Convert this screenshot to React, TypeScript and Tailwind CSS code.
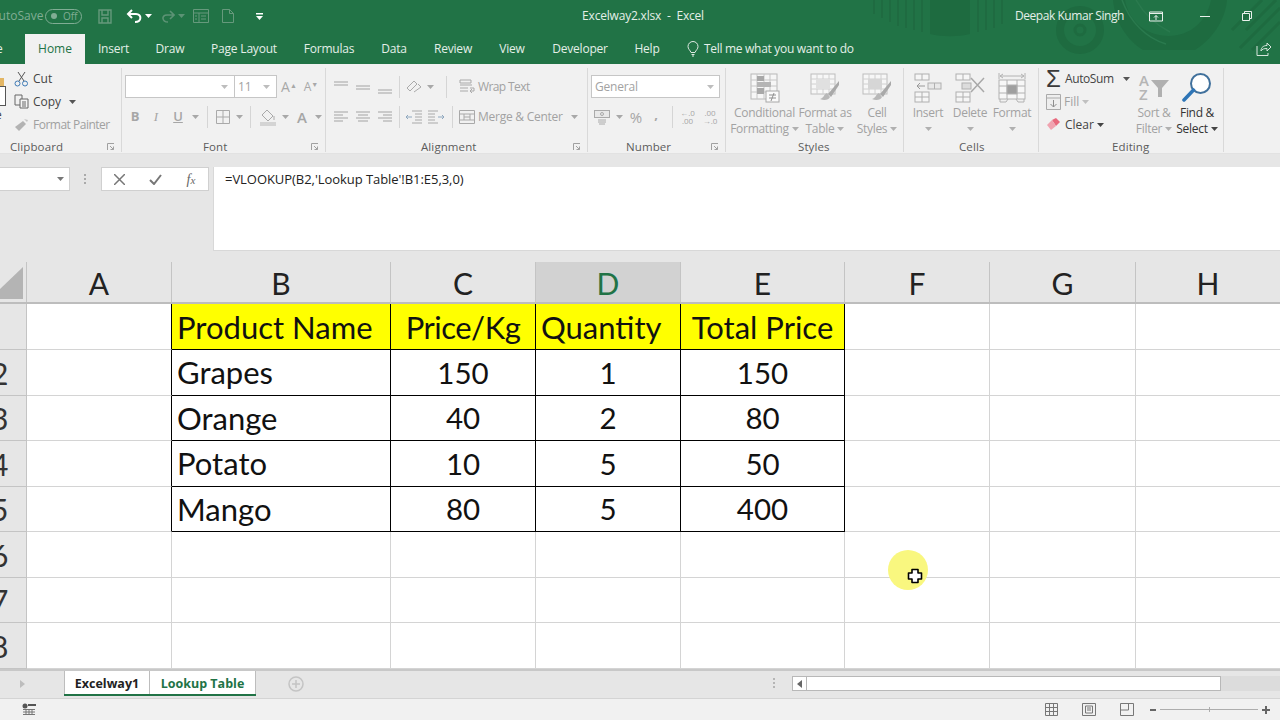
import React from "react";

const UI = "font-['Open_Sans','Noto_Sans',sans-serif]";
const SHEET = "font-['Lato','Liberation_Sans',sans-serif]";

const Chev = ({ c = "#a8a8a8" }: { c?: string }) => (
  <svg width="7" height="4" viewBox="0 0 7 4"><path d="M0 0h7L3.5 4z" fill={c} /></svg>
);

const Launcher = () => (
  <svg width="8" height="8" viewBox="0 0 8 8" fill="none" stroke="#a0a0a0"><path d="M.5 7V.5H7M3 3l3.5 3.5M6.5 3.5v3h-3" /></svg>
);

function Group({ w, label, lc, children, launch }: { w: string; label: string; lc: string; children: React.ReactNode; launch?: boolean }) {
  return (
    <div className={`${w} h-[84px] shrink-0 flex flex-col border-r border-[#d9d9d9]`}>
      <div className="h-[72px] shrink-0">{children}</div>
      <div className="flex-1 flex items-center pr-[6px] pt-[1px]">
        <span className={`${lc} text-[11.5px] leading-none text-[#5c5c5c] tracking-[0.1px]`}>{label}</span>
        {launch && <Launcher />}
      </div>
    </div>
  );
}

const Slot = ({ w, children }: { w: string; children?: React.ReactNode }) => (
  <div className={`${w} shrink-0 h-full flex items-center justify-center`}>{children}</div>
);

const Sep = () => <div className="w-px h-[22px] bg-[#d5d5d5] shrink-0" />;

const Lines = ({ v }: { v: "top" | "mid" | "bot" | "l" | "c" | "r" }) => {
  const d = {
    top: "M2 3h14M2 6h14",
    mid: "M2 7h14M2 10h14",
    bot: "M2 11h14M2 14h14",
    l: "M2 3h14M2 6h9M2 9h14M2 12h9",
    c: "M2 3h14M4 6h10M2 9h14M4 12h10",
    r: "M2 3h14M7 6h9M2 9h14M7 12h9",
  }[v];
  return <svg width="18" height="16" viewBox="0 0 18 16" fill="none" stroke="#a3a3a3"><path d={d} /></svg>;
};

function BigBtn({ w, top, bottom, icon, dark, chev }: { w: string; top: string; bottom?: string; icon: React.ReactNode; dark?: boolean; chev?: boolean }) {
  const color = dark ? "text-[#333333]" : "text-[#a2a2a2]";
  return (
    <div className={`${w} shrink-0 flex flex-col items-center`}>
      <div className="h-[33px] flex items-center justify-center">{icon}</div>
      <div className={`${color} text-[12px] leading-[16px] mt-[1px] whitespace-nowrap tracking-[-0.3px]`}>{top}</div>
      <div className={`${color} text-[12px] leading-[16px] whitespace-nowrap flex items-center gap-[3px] h-[16px] tracking-[-0.3px]`}>
        {bottom}
        {chev && <Chev c={dark ? "#444" : "#b0b0b0"} />}
      </div>
    </div>
  );
}

const IconCond = () => (
  <svg width="30" height="30" viewBox="0 0 30 30" fill="none">
    <rect x="1" y="1" width="26" height="25" fill="#f6f6f6" stroke="#b8b8b8" />
    <path d="M7 1v25M14 1v25M20 1v25M1 7h26M1 13h26M1 19h26" stroke="#c6c6c6" />
    <rect x="7" y="3" width="7" height="5" fill="#a8a8a8" />
    <rect x="7" y="9" width="14" height="5" fill="#b5b5b5" />
    <rect x="7" y="15" width="7" height="6" fill="#a8a8a8" />
    <rect x="16" y="18" width="13" height="11" fill="#fafafa" stroke="#a8a8a8" />
    <path d="M19 22h7M19 25h7M24 20l-3 8" stroke="#8f8f8f" />
  </svg>
);
const IconTable = ({ fill = "#e0e0e0" }: { fill?: string }) => (
  <svg width="30" height="30" viewBox="0 0 30 30" fill="none">
    <rect x="1" y="1" width="24" height="20" fill="#f7f7f7" stroke="#bdbdbd" />
    <path d="M7 1v20M13 1v20M19 1v20M1 6h24M1 11h24M1 16h24" stroke="#d0d0d0" />
    <rect x="6" y="6" width="14" height="10" fill={fill} />
    <path d="M29 8 18 21l3 3L29 12z" fill="#a9a9a9" />
    <path d="M17 20c-3 1-3 5-7 6 4 2 9 1 10-2z" fill="#b8b8b8" />
  </svg>
);
const IconInsert = () => (
  <svg width="28" height="30" viewBox="0 0 28 30" fill="none" stroke="#b0b0b0">
    <rect x="1" y="1" width="14" height="6" fill="#f6f6f6" /><path d="M8 1v6" />
    <path d="M11 13H3M6 10l-3 3 3 3" stroke="#999" />
    <rect x="14" y="10" width="13" height="6" fill="#e8e8e8" /><path d="M20.5 10v6" />
    <rect x="1" y="19" width="14" height="10" fill="#f6f6f6" /><path d="M8 19v10M1 24h14" />
  </svg>
);
const IconDelete = () => (
  <svg width="30" height="30" viewBox="0 0 30 30" fill="none" stroke="#b0b0b0">
    <rect x="1" y="1" width="14" height="6" fill="#f6f6f6" /><path d="M8 1v6" />
    <rect x="7" y="10" width="9" height="6" fill="#dcdcdc" />
    <rect x="1" y="19" width="14" height="10" fill="#f6f6f6" /><path d="M8 19v10M1 24h14" />
    <path d="M16 19 29 5M16 5l13 14" stroke="#a8a8a8" strokeWidth="1.5" />
  </svg>
);
const IconFormat = () => (
  <svg width="28" height="32" viewBox="0 0 28 32" fill="none" stroke="#b2b2b2">
    <path d="M1 1v6M27 1v6M2 4h24M2 4l3-2M2 4l3 2M26 4l-3-2M26 4l-3 2" />
    <rect x="1" y="8" width="26" height="19" fill="#f7f7f7" />
    <path d="M9 8v19M19 8v19M1 14h26M1 21h26" />
    <rect x="9" y="13" width="10" height="9" fill="#9f9f9f" />
    <path d="M2 27v3h6l2-3M18 27l2 3h6v-3" />
  </svg>
);
const IconSort = () => (
  <div className="flex items-start h-[33px]">
    <div className="flex flex-col text-[#b5b5b5] text-[15px] leading-[14px] font-semibold w-[12px] pt-[2px]">
      <span>A</span>
      <span>Z</span>
    </div>
    <svg width="18" height="18" viewBox="0 0 18 18" className="mt-[8px]"><path d="M0 1h18l-7 8v9H7V9z" fill="#b0b0b0" /></svg>
  </div>
);
const IconFind = () => (
  <svg width="30" height="32" viewBox="0 0 30 32" fill="none">
    <circle cx="18.5" cy="11.5" r="9.5" stroke="#41719c" strokeWidth="2" fill="#fff" />
    <path d="M11.5 18 2 28" stroke="#2e75b6" strokeWidth="3.5" strokeLinecap="round" />
  </svg>
);

function Ribbon() {
  return (
    <div className="h-[90px] bg-[#f1f1f1] pt-[4px] flex shrink-0 border-b border-[#e2e2e2]">
      <Group w="w-[122px]" label="Clipboard" lc="ml-[10px] mr-auto" launch>
        <div className="flex h-full">
          <div className="w-[6px] flex flex-col pt-[10px] overflow-hidden">
            <div className="w-[10px] h-[8px] bg-[#e3b664] -ml-[6px]" />
            <div className="w-[12px] h-[20px] bg-white border border-[#555] -ml-[6px]" />
            <span className="text-[12px] leading-none text-[#444] -ml-[5px] mt-[3px]">e</span>
          </div>
          <div className="pl-[8px] flex flex-col text-[12px] leading-[23px]">
            <div className="h-[23px] -mt-[1px] flex items-center gap-[4px] text-[#444]">
              <svg width="15" height="16" viewBox="0 0 15 16" fill="none" stroke="#555"><path d="M4 1l6 9M11 1 5 10" /><circle cx="3.5" cy="12.5" r="2.5" stroke="#3d7ab5" /><circle cx="11" cy="12.5" r="2.5" stroke="#3d7ab5" /></svg>
              <span>Cut</span>
            </div>
            <div className="h-[23px] flex items-center gap-[4px] text-[#444]">
              <svg width="15" height="15" viewBox="0 0 15 15" fill="none" stroke="#666"><path d="M1 1h7v10H1z" /><path d="M6 5h8v9H6z" fill="#f4f4f4" /><path d="M8 8h4M8 10h4M8 12h4" /></svg>
              <span>Copy</span>
              <span className="ml-[4px]"><Chev c="#555" /></span>
            </div>
            <div className="h-[23px] flex items-center gap-[4px] text-[#a0a0a0] whitespace-nowrap">
              <svg width="15" height="14" viewBox="0 0 15 14"><path d="M1 9 9 3l3 3-7 7z" fill="#b3b3b3" /><path d="M10 1l3 3 1-2z" fill="#c4c4c4" /></svg>
              <span className="tracking-[-0.5px]">Format Painter</span>
            </div>
          </div>
        </div>
      </Group>

      <Group w="w-[204px]" label="Font" lc="ml-[81px] mr-auto" launch>
        <div className="pl-[3px] pt-[7px]">
          <div className="flex items-center h-[23px]">
            <div className="w-[110px] h-full bg-white border border-[#c6c6c6] flex items-center justify-end pr-[6px]"><Chev c="#bdbdbd" /></div>
            <div className="w-[42px] h-full bg-white border border-l-0 border-[#c6c6c6] flex items-center justify-between pl-[3px] pr-[6px] text-[12px] text-[#a2a2a2]"><span>11</span><Chev c="#bdbdbd" /></div>
            <div className="w-[22px] text-center text-[14px] leading-none text-[#a8a8a8] ml-[1px]">A<sup className="text-[7px]">▲</sup></div>
            <div className="w-[22px] text-center text-[12px] leading-none text-[#a8a8a8]">A<sup className="text-[7px]">▼</sup></div>
          </div>
          <div className="flex items-center h-[22px] mt-[8px] text-[#a6a6a6] text-[13px]">
            <Slot w="w-[20px]"><b>B</b></Slot>
            <Slot w="w-[22px]"><i className="font-['Liberation_Serif',serif]">I</i></Slot>
            <Slot w="w-[22px]"><span className="underline font-semibold">U</span></Slot>
            <Slot w="w-[13px]"><Chev /></Slot>
            <Slot w="w-[11px]"><Sep /></Slot>
            <Slot w="w-[20px]">
              <svg width="14" height="14" viewBox="0 0 14 14" fill="none" stroke="#a9a9a9"><path d="M.5.5h13v13H.5zM7 .5v13M.5 7h13" /></svg>
            </Slot>
            <Slot w="w-[13px]"><Chev /></Slot>
            <Slot w="w-[9px]"><Sep /></Slot>
            <Slot w="w-[25px]">
              <svg width="16" height="17" viewBox="0 0 16 17" fill="none"><path d="M7 1l6 6-5 5-6-6z" stroke="#a9a9a9" /><path d="M14 7v4" stroke="#a9a9a9" /><rect y="13" width="16" height="4" fill="#d4d4d4" /></svg>
            </Slot>
            <Slot w="w-[10px]"><Chev /></Slot>
            <Slot w="w-[24px]"><span className="text-[15px] font-semibold">A</span></Slot>
            <Slot w="w-[8px]"><Chev /></Slot>
          </div>
        </div>
      </Group>

      <Group w="w-[262px]" label="Alignment" lc="ml-[95px] mr-auto" launch>
        <div className="pl-[4px] pt-[7px]">
          <div className="flex items-center h-[23px]">
            <Slot w="w-[22px]"><Lines v="top" /></Slot>
            <Slot w="w-[22px]"><Lines v="mid" /></Slot>
            <Slot w="w-[22px]"><Lines v="bot" /></Slot>
            <Slot w="w-[7px]"><Sep /></Slot>
            <Slot w="w-[22px]">
              <svg width="18" height="16" viewBox="0 0 18 16" fill="none" stroke="#aaa"><path d="M2 9 9 2l3 3-7 7zM9 13l7-5M13 5l3 3" /></svg>
            </Slot>
            <Slot w="w-[10px]"><Chev /></Slot>
            <Slot w="w-[22px]"><Sep /></Slot>
            <Slot w="w-[20px]">
              <svg width="17" height="16" viewBox="0 0 17 16" fill="none" stroke="#a9a9a9"><path d="M1 1h11v3H1zM1 6h12M1 9h8M1 12h8M11 9h4v3h-3M13 10l-2 2 2 2" /></svg>
            </Slot>
            <span className="text-[12px] text-[#a2a2a2] whitespace-nowrap ml-[1px] tracking-[-0.6px]">Wrap Text</span>
          </div>
          <div className="flex items-center h-[22px] mt-[8px]">
            <Slot w="w-[22px]"><Lines v="l" /></Slot>
            <Slot w="w-[22px]"><Lines v="c" /></Slot>
            <Slot w="w-[22px]"><Lines v="r" /></Slot>
            <Slot w="w-[7px]"><Sep /></Slot>
            <Slot w="w-[22px]">
              <svg width="18" height="14" viewBox="0 0 18 14" fill="none" stroke="#a9a9a9"><path d="M7 1h10M10 4h7M10 7h7M10 10h7M7 13h10" /><path d="M7 7H1M3 5 1 7l2 2" stroke="#8fa8bf" /></svg>
            </Slot>
            <Slot w="w-[22px]">
              <svg width="18" height="14" viewBox="0 0 18 14" fill="none" stroke="#a9a9a9"><path d="M1 1h10M1 4h7M1 7h7M1 10h7M1 13h10" /><path d="M11 7h6M15 5l2 2-2 2" stroke="#8fa8bf" /></svg>
            </Slot>
            <Slot w="w-[10px]"><Sep /></Slot>
            <Slot w="w-[20px]">
              <svg width="16" height="14" viewBox="0 0 16 14" fill="none" stroke="#a9a9a9"><path d="M.5.5h15v13H.5zM.5 4h15M.5 10h15M5 4v6M11 4v6M5 7h6" /></svg>
            </Slot>
            <span className="text-[12px] text-[#a2a2a2] whitespace-nowrap ml-[1px] tracking-[-0.25px]">Merge &amp; Center</span>
            <span className="ml-[8px]"><Chev /></span>
          </div>
        </div>
      </Group>

      <Group w="w-[138px]" label="Number" lc="ml-[38px] mr-auto" launch>
        <div className="pl-[3px] pt-[7px]">
          <div className="w-[129px] h-[23px] bg-white border border-[#c6c6c6] flex items-center justify-between pl-[3px] pr-[5px] text-[12px] text-[#a2a2a2]">
            <span className="tracking-[-0.2px]">General</span><Chev c="#bdbdbd" />
          </div>
          <div className="flex items-center h-[22px] mt-[8px] text-[#a6a6a6]">
            <Slot w="w-[22px]">
              <svg width="16" height="16" viewBox="0 0 16 16" fill="none" stroke="#aaa"><rect x=".5" y="1.5" width="15" height="7" fill="#e8e8e8" /><circle cx="8" cy="5" r="1.5" /><path d="M4 11h8M4 13h8M5 15h6" /></svg>
            </Slot>
            <Slot w="w-[12px]"><Chev /></Slot>
            <Slot w="w-[22px]"><span className="text-[15px]">%</span></Slot>
            <Slot w="w-[18px]"><b className="text-[13px] -mt-[4px]">,</b></Slot>
            <Slot w="w-[14px]"><Sep /></Slot>
            <Slot w="w-[17px]"><span className="text-[8px] leading-[8px] text-center">←.0<br />.00</span></Slot>
            <Slot w="w-[28px]"><span className="text-[8px] leading-[8px] text-center">.00<br />→.0</span></Slot>
          </div>
        </div>
      </Group>

      <Group w="w-[178px]" label="Styles" lc="ml-[72px] mr-auto">
        <div className="flex pl-[3px] pt-[3px]">
          <BigBtn w="w-[71px]" top="Conditional" bottom="Formatting" chev icon={<IconCond />} />
          <BigBtn w="w-[50px]" top="Format as" bottom="Table" chev icon={<IconTable />} />
          <BigBtn w="w-[54px]" top="Cell" bottom="Styles" chev icon={<IconTable fill="#d6d6d6" />} />
        </div>
      </Group>

      <Group w="w-[135px]" label="Cells" lc="ml-[55px] mr-auto">
        <div className="flex pl-[3px] pt-[3px]">
          <BigBtn w="w-[42px]" top="Insert" chev icon={<IconInsert />} />
          <BigBtn w="w-[42px]" top="Delete" chev icon={<IconDelete />} />
          <BigBtn w="w-[42px]" top="Format" chev icon={<IconFormat />} />
        </div>
      </Group>

      <Group w="w-[185px]" label="Editing" lc="ml-[73px] mr-auto">
        <div className="flex pl-[7px] pt-[3px]">
          <div className="w-[90px] flex flex-col text-[12px] text-[#444] -mt-[4px]">
            <div className="h-[23px] flex items-center gap-[2px]">
              <span className="w-[17px] text-[24px] leading-none text-[#3a3a3a] font-['Liberation_Sans',sans-serif]">Σ</span>
              <span className="tracking-[-0.4px]">AutoSum</span>
              <span className="ml-[7px]"><Chev c="#555" /></span>
            </div>
            <div className="h-[23px] flex items-center gap-[3px] text-[#a2a2a2]">
              <svg width="15" height="16" viewBox="0 0 15 16" fill="none" stroke="#aaa"><path d="M.5.5h14v15H.5z" fill="#eeeeee" /><path d="M.5 4h14" /><path d="M7.5 6v7M4.5 10l3 3 3-3" stroke="#8d8d8d" /></svg>
              <span>Fill</span><Chev c="#c0c0c0" />
            </div>
            <div className="h-[23px] flex items-center gap-[5px]">
              <svg width="14" height="13" viewBox="0 0 14 13"><path d="M6 2l4-2 4 4-4 4z" fill="#e8697d" /><path d="M6 2 1 7l4 5 5-4z" fill="#f0a3b0" /></svg>
              <span>Clear</span><span className="-ml-[2px]"><Chev c="#444" /></span>
            </div>
          </div>
          <BigBtn w="w-[36px]" top="Sort &" bottom="Filter" chev icon={<IconSort />} />
          <div className="w-[4px]" />
          <BigBtn w="w-[42px]" top="Find &" bottom="Select" chev dark icon={<IconFind />} />
        </div>
      </Group>
      <div className="flex-1" />
    </div>
  );
}

const TABS: [string, string][] = [
  ["Insert", "w-[57px]"],
  ["Draw", "w-[56px]"],
  ["Page Layout", "w-[92px]"],
  ["Formulas", "w-[78px]"],
  ["Data", "w-[52px]"],
  ["Review", "w-[66px]"],
  ["View", "w-[52px]"],
  ["Developer", "w-[84px]"],
  ["Help", "w-[50px]"],
];

function TitleBar() {
  return (
    <div className="h-[64px] bg-[#217346] shrink-0 relative overflow-hidden text-[#e4efe8]">
      <svg width="420" height="64" viewBox="0 0 420 64" fill="none" className="absolute left-[860px] top-0">
        <g stroke="#1f6b41" strokeWidth="2"><path d="M14 0v14M22 0v18M30 0v22M38 0v26M46 0v28M54 0v30M62 0v32M118 0v32M126 0v30M134 0v28M142 0v24" /></g>
        <path d="M70 0v34c12 3 28 3 40 0V0z" fill="#1e6b40" />
        <circle cx="220" cy="30" r="20" stroke="#1e6b40" strokeWidth="8" />
        <circle cx="220" cy="30" r="5" stroke="#1e6b40" strokeWidth="3" />
        <path d="M253 0c2 22 14 40 30 50h52c16-10 30-28 32-50h-16c-4 22-22 36-42 36-22 0-40-14-44-36z" fill="#1e6b40" />
        <path d="M262 0c8 22 24 38 44 44M276 0c8 14 18 24 34 32" stroke="#2a7a4e" strokeWidth="1.500" />
        <path d="M380 48 420 8M392 50 420 22M372 30 402 0M386 30 416 0" stroke="#1e6b40" strokeWidth="3" />
      </svg>
      <div className="relative h-[32px] flex items-center">
        <span className="text-[12px] text-[#80ad94] -ml-[9px] whitespace-nowrap w-[54px] shrink-0">AutoSave</span>
        <div className="w-[37px] h-[15px] rounded-full border border-[#80ad94] flex items-center pl-[5px] gap-[6px] shrink-0">
          <span className="w-[6px] h-[6px] rounded-full bg-[#80ad94]" />
          <span className="text-[10px] leading-none text-[#80ad94]">Off</span>
        </div>
        <svg width="14" height="15" viewBox="0 0 14 15" fill="none" stroke="#66997c" className="ml-[16px] shrink-0" strokeWidth="1.4"><path d="M1 1h12v13H1zM4 1v5h6V1M4 14V9h6v5" /></svg>
        <svg width="16" height="14" viewBox="0 0 16 14" fill="none" stroke="#fff" strokeWidth="2" className="ml-[14px] shrink-0"><path d="M2 5h8c6 0 6 8-1 8M6 1 2 5l4 4" /></svg>
        <span className="ml-[3px]"><Chev c="#fff" /></span>
        <svg width="14" height="13" viewBox="0 0 14 13" fill="none" stroke="#5c9375" strokeWidth="1.6" className="ml-[9px] shrink-0"><path d="M13 5H6c-6 0-5 7 1 7M9 1l4 4-4 4" /></svg>
        <span className="ml-[3px]"><Chev c="#5c9375" /></span>
        <svg width="16" height="14" viewBox="0 0 16 14" fill="none" stroke="#66997c" className="ml-[8px] shrink-0"><path d="M.5.5h15v13H.5zM.5 4h15M6 4v9.500M8 7h5M8 10h5M2 7h2M2 10h2" /></svg>
        <svg width="12" height="14" viewBox="0 0 12 14" fill="none" stroke="#66997c" className="ml-[13px] shrink-0"><path d="M.5.5h7l4 4v9h-11zM7.500.5v4h4" /></svg>
        <svg width="7" height="7" viewBox="0 0 7 7" className="ml-[22px] shrink-0"><path d="M0 0h7v1.500H0zM0 3h7L3.500 7z" fill="#fff" /></svg>
        <span className="text-[12px] ml-[319px] w-[122px] text-center whitespace-pre shrink-0 tracking-[-0.2px]">Excelway2.xlsx  -  Excel</span>
        <span className="text-[12px] ml-[311px] w-[108px] whitespace-nowrap shrink-0 tracking-[-0.45px]">Deepak Kumar Singh</span>
        <svg width="14" height="11" viewBox="0 0 14 11" fill="none" stroke="#e9f1ec" className="ml-[26px] shrink-0"><path d="M.5 1h13v9H.5zM.5 2.500h13M7 9V4.500M5 6.500l2-2 2 2" /></svg>
        <div className="w-[10px] h-px bg-[#e9f1ec] ml-[37px] shrink-0" />
        <svg width="10" height="10" viewBox="0 0 10 10" fill="none" stroke="#e9f1ec" className="ml-[32px] shrink-0"><path d="M.5 2.500h7v7h-7zM2.500 2.500v-2h7v7h-2" /></svg>
      </div>
      <div className="relative h-[32px] pt-[2px] flex items-stretch text-[12px]">
        <span className="w-[25px] flex items-center shrink-0 overflow-hidden"><span className="-ml-[4px]">e</span></span>
        <div className="w-[60px] bg-[#f1f1f1] text-[#217346] flex items-center justify-center shrink-0 font-medium">Home</div>
        {TABS.map(([t, w]) => (
          <div key={t} className={`${w} flex items-center justify-center shrink-0 whitespace-nowrap tracking-[-0.2px]`}>{t}</div>
        ))}
        <div className="flex items-center ml-[15px] shrink-0">
          <svg width="12" height="16" viewBox="0 0 12 16" fill="none" stroke="#dfeae3"><path d="M4 11.500C3 9 1 8 1 5.500a5 5 0 0 1 10 0c0 2.500-2 3.500-3 6zM4.500 13.500h3M5 15h2" /></svg>
          <span className="ml-[5px] whitespace-nowrap tracking-[-0.3px]">Tell me what you want to do</span>
        </div>
        <div className="flex items-center ml-[402px] shrink-0">
          <svg width="16" height="14" viewBox="0 0 16 14" fill="none" stroke="#d8e6dd"><path d="M1 4v9.500h11V11M5 9c0-4 3-5.500 6-5.500V1l4 4-4 4V6.500c-3 0-5 .5-6 2.500z" /></svg>
        </div>
      </div>
    </div>
  );
}

function FormulaBar() {
  return (
    <div className="h-[108px] bg-[#e6e6e6] shrink-0 flex pt-[13px] items-start">
      <div className="w-[70px] h-[24px] bg-white border border-l-0 border-[#d0d0d0] flex items-center justify-end pr-[5px] shrink-0"><Chev c="#777" /></div>
      <div className="w-[31px] h-[24px] flex items-center justify-center shrink-0">
        <svg width="3" height="11" viewBox="0 0 3 11" fill="#aaa"><rect width="2" height="2" /><rect y="4" width="2" height="2" /><rect y="8" width="2" height="2" /></svg>
      </div>
      <div className="w-[108px] h-[24px] bg-white border border-[#d0d0d0] flex items-center shrink-0">
        <Slot w="w-[35px]"><svg width="11" height="11" viewBox="0 0 11 11" stroke="#777" strokeWidth="1.5"><path d="M0 0l11 11M11 0 0 11" /></svg></Slot>
        <Slot w="w-[36px]"><svg width="13" height="11" viewBox="0 0 13 11" fill="none" stroke="#777" strokeWidth="2"><path d="M1 6l4 4 7-9" /></svg></Slot>
        <Slot w="w-[36px]"><span className="font-['Liberation_Serif',serif] italic text-[14px] text-[#666]">f<span className="text-[11px]">x</span></span></Slot>
      </div>
      <div className="ml-[4px] flex-1 h-[84px] bg-white border-l border-b border-[#d8d8d8] pl-[11px] pt-[4px] text-[13px] leading-[16px] text-[#222] font-['Open_Sans',sans-serif] tracking-[-0.05px]">
        =VLOOKUP(B2,'Lookup Table'!B1:E5,3,0)
      </div>
    </div>
  );
}

const COLS = [
  { l: "A", w: "w-[145px]" },
  { l: "B", w: "w-[219px]" },
  { l: "C", w: "w-[145px]" },
  { l: "D", w: "w-[145px]" },
  { l: "E", w: "w-[164px]" },
  { l: "F", w: "w-[145px]" },
  { l: "G", w: "w-[146px]" },
  { l: "H", w: "w-[145px]" },
];
const ROWS: { h: string; n: string; c: string[]; head?: boolean }[] = [
  { h: "h-[46px]", n: "1", head: true, c: ["Product Name", "Price/Kg", "Quantity", "Total Price"] },
  { h: "h-[46px]", n: "2", c: ["Grapes", "150", "1", "150"] },
  { h: "h-[45px]", n: "3", c: ["Orange", "40", "2", "80"] },
  { h: "h-[46px]", n: "4", c: ["Potato", "10", "5", "50"] },
  { h: "h-[45px]", n: "5", c: ["Mango", "80", "5", "400"] },
  { h: "h-[46px]", n: "6", c: [] },
  { h: "h-[45px]", n: "7", c: [] },
  { h: "h-[46px]", n: "8", c: [] },
];

function Sheet() {
  return (
    <div className={`${SHEET} flex-1 min-h-0 flex flex-col bg-white overflow-hidden`}>
      <div className="h-[42px] flex shrink-0 bg-[#e6e6e6] border-b-2 border-[#bdbdbd]">
        <div className="w-[27px] shrink-0 border-r border-[#c4c4c4] flex items-end justify-end pb-[3px] pr-[2px]">
          <svg width="24" height="36" viewBox="0 0 24 36"><path d="M23 4v32H0V26z" fill="#b4b4b4" /></svg>
        </div>
        {COLS.map((c) => (
          <div key={c.l} className={`${c.w} shrink-0 flex items-center justify-center pt-[2px] text-[30px] leading-none border-r border-[#c4c4c4] ${c.l === "D" ? "bg-[#d2d2d2] text-[#217346] border-[#ababab]" : "text-[#222]"}`}>
            {c.l}
          </div>
        ))}
      </div>
      {ROWS.map((r) => (
        <div key={r.n} className={`${r.h} flex shrink-0 text-[31px] leading-none text-[#111]`}>
          <div className="w-[27px] shrink-0 bg-[#e6e6e6] border-r border-b border-[#c4c4c4] flex items-center overflow-hidden text-[#333] text-[30px]">
            <span className="-ml-[9px]">{r.n === "1" ? "" : r.n}</span>
          </div>
          {COLS.map((c, i) => {
            const inTable = r.c.length > 0 && i >= 1 && i <= 4;
            const leftOfTable = r.c.length > 0 && i === 0;
            const numeric = !r.head && i >= 2;
            const leftAligned = i === 1 || (r.head && i === 3);
            return (
              <div
                key={c.l}
                className={`${c.w} shrink-0 flex items-center border-r border-b ${
                  inTable ? "border-black" : "border-[#d4d4d4]"
                } ${leftOfTable ? "border-r-black" : ""} ${r.head && inTable ? "bg-[#ffff00] pt-[2px]" : ""} ${
                  leftAligned ? "justify-start pl-[5px]" : "justify-center"
                } ${numeric ? "text-[29.5px]" : ""} ${r.head && i === 2 ? "tracking-[-0.5px]" : ""}`}
              >
                {inTable ? r.c[i - 1] : ""}
              </div>
            );
          })}
        </div>
      ))}
    </div>
  );
}

function Bottom() {
  return (
    <div className="shrink-0">
      <div className="h-[29px] bg-[#e6e6e6] border-t-2 border-[#c8c8c8] flex items-start">
        <div className="w-[64px] h-[25px] flex items-center justify-center shrink-0 pr-[20px]">
          <svg width="5" height="8" viewBox="0 0 5 8"><path d="M0 0l5 4-5 4z" fill="#bdbdbd" /></svg>
        </div>
        <div className="w-[192px] h-[25px] flex border-b-2 border-[#217346] shrink-0 bg-white text-[12.5px] font-bold leading-none">
          <div className="w-[86px] pt-[3px] flex items-center justify-center border-l border-r border-[#bdbdbd] text-[#222]">Excelway1</div>
          <div className="w-[106px] pt-[3px] flex items-center justify-center border-r border-[#bdbdbd] text-[#217346]">Lookup Table</div>
        </div>
        <div className="w-[80px] h-[25px] flex items-center justify-center shrink-0">
          <svg width="16" height="16" viewBox="0 0 16 16" fill="none" stroke="#c4c4c4" strokeWidth="1.500"><circle cx="8" cy="8" r="7" /><path d="M8 4v8M4 8h8" /></svg>
        </div>
        <div className="w-[456px] h-[25px] flex items-center justify-end pr-[16px] shrink-0">
          <svg width="3" height="11" viewBox="0 0 3 11" fill="#b5b5b5"><rect width="2" height="2" /><rect y="4" width="2" height="2" /><rect y="8" width="2" height="2" /></svg>
        </div>
        <div className="flex-1 h-[15px] mt-[5px] bg-[#dcdcdc] flex">
          <div className="w-[15px] h-full bg-white border border-[#b8b8b8] flex items-center justify-center shrink-0">
            <svg width="5" height="8" viewBox="0 0 5 8"><path d="M5 0 0 4l5 4z" fill="#666" /></svg>
          </div>
          <div className="w-[414px] h-full bg-white border border-l-0 border-[#b8b8b8]" />
        </div>
      </div>
      <div className="h-[22px] bg-[#f1f1f1] border-t border-[#d4d4d4] flex items-center">
        <svg width="14" height="13" viewBox="0 0 14 13" fill="none" className="ml-[22px] shrink-0"><circle cx="3" cy="3" r="2.500" fill="#555" /><path d="M6 1h8v2H6z" fill="#555" /><path d="M1 6.500h12M1 9h12M1 11.500h12M4 6v6M7 6v6M10 6v6" stroke="#777" /></svg>
        <svg width="13" height="13" viewBox="0 0 13 13" fill="none" stroke="#777" className="ml-[1009px] shrink-0"><path d="M.5.5h12v12H.5zM.5 4.500h12M.5 8.500h12M4.500.5v12M8.500.5v12" /></svg>
        <svg width="14" height="13" viewBox="0 0 14 13" fill="none" stroke="#777" className="ml-[24px] shrink-0"><path d="M.5.5h13v12H.5zM3.500 3h7v7h-7zM5 5h4M5 7h4" /></svg>
        <svg width="14" height="13" viewBox="0 0 14 13" fill="none" stroke="#777" className="ml-[24px] shrink-0"><path d="M.5.5h13v12H.5zM.5 7h8V.5" /></svg>
        <div className="w-[6px] h-[2px] bg-[#666] ml-[16px] shrink-0" />
        <div className="w-[98px] h-px bg-[#adadad] ml-[4px] shrink-0 flex items-center justify-center">
          <div className="w-px h-[5px] bg-[#adadad]" />
        </div>
        <svg width="8" height="8" viewBox="0 0 8 8" className="ml-[4px] shrink-0"><path d="M3 0h2v3h3v2H5v3H3V5H0V3h3z" fill="#666" /></svg>
      </div>
    </div>
  );
}

export default function App() {
  return (
    <div className={`${UI} relative w-[1280px] h-[720px] overflow-hidden flex flex-col bg-white`}>
      <TitleBar />
      <Ribbon />
      <FormulaBar />
      <Sheet />
      <Bottom />
      <div className="absolute left-[888px] top-[550px] w-[40px] h-[40px] rounded-full bg-[#f9f77f]" />
      <svg width="16" height="16" viewBox="0 0 16 16" className="absolute left-[907px] top-[568px]">
        <path d="M5 1.500h6v3.500h3.500v6H11v3.500H5V11H1.500V5H5z" fill="#fff" stroke="#000" strokeWidth="1.600" strokeLinejoin="round" />
      </svg>
    </div>
  );
}
